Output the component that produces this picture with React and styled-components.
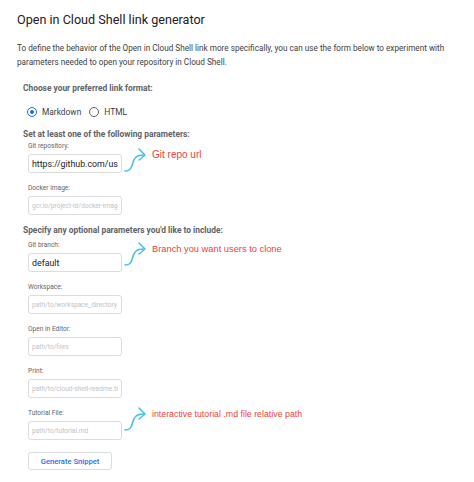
import { createGlobalStyle, styled } from "styled-components";

const GlobalStyle = createGlobalStyle`
    body{
        margin: 0;
        background: #ffffff;
        font-family: Roboto, "Liberation Sans", sans-serif;
    }
`;

const fields = [
    { label: "Git repository:", value: "https://github.com/user", note: "Git repo url", noteSize: 10, lift: 7 },
    { label: "Docker image:", placeholder: "gcr.io/project-id/docker-images" },
];

const optional = [
    { label: "Git branch:", value: "default", note: "Branch you want users to clone", noteSize: 9.3, lift: 12 },
    { label: "Workspace:", placeholder: "path/to/workspace_directory" },
    { label: "Open in Editor:", placeholder: "path/to/files" },
    { label: "Print:", placeholder: "path/to/cloud-shell-readme.txt" },
    { label: "Tutorial File:", placeholder: "path/to/tutorial.md", note: "interactive tutorial .md file relative path", noteSize: 8.8, lift: 15 },
];

// hand-drawn squiggle arrow pointing at a note
function Arrow() {
    return (
        <svg width="24" height="26" viewBox="0 0 24 26" fill="none" stroke="#45c2e2" strokeWidth="1.5" strokeLinecap="round" strokeLinejoin="round">
            <path d="M1 24 C5 24 7 23 8.5 17 C10 11 12 8 20 8" />
            <path d="M15 2 L21 8 L15 13" />
        </svg>
    );
}

function Field({ label, value, placeholder, note, noteSize, lift }) {
    return (
        <FieldBox>
            <Label>{label}</Label>
            <Row>
                <TextInput $filled={!!value} defaultValue={value} placeholder={placeholder} readOnly />
                {note && (
                    <Note $lift={lift}>
                        <Arrow />
                        <NoteText $size={noteSize}>{note}</NoteText>
                    </Note>
                )}
            </Row>
        </FieldBox>
    );
}

export default function App() {
    return (
        <Page>
            <GlobalStyle />
            <Title>Open in Cloud Shell link generator</Title>
            <Intro>
                To define the behavior of the Open in Cloud Shell link more specifically, you can use the form below to experiment with
                parameters needed to open your repository in Cloud Shell.
            </Intro>
            <Form>
                <Heading>Choose your preferred link format:</Heading>
                <RadioRow>
                    <Radio $checked />
                    <RadioLabel>Markdown</RadioLabel>
                    <Radio />
                    <RadioLabel>HTML</RadioLabel>
                </RadioRow>
                <Heading>Set at least one of the following parameters:</Heading>
                <Fields $top={3}>
                    {fields.map(f => <Field key={f.label} {...f} />)}
                </Fields>
                <Heading $top={10}>Specify any optional parameters you'd like to include:</Heading>
                <Fields $top={6}>
                    {optional.map(f => <Field key={f.label} {...f} />)}
                </Fields>
                <Button>Generate Snippet</Button>
            </Form>
        </Page>
    );
}

const Page = styled.main`
    width: 474px;
    height: 482px;
    box-sizing: border-box;
    padding: 11px 0 0 17px;
    overflow: hidden;
`;

const Title = styled.h1`
    margin: 0;
    font-weight: 400;
    font-size: 12.6px;
    line-height: 18px;
    color: #202124;
`;

const Intro = styled.p`
    margin: 12px 0 0;
    font-size: 8.2px;
    line-height: 14px;
    color: #3c4043;
    width: 455px;
`;

const Form = styled.section`
    padding-left: 6px;
    margin-top: 14px;
    display: flex;
    flex-direction: column;
`;

const Heading = styled.h2`
    margin: ${p => p.$top || 0}px 0 0;
    font-size: 8.4px;
    line-height: 10px;
    font-weight: 700;
    color: #5f6368;
`;

const RadioRow = styled.div`
    display: flex;
    align-items: center;
    height: 12px;
    margin: 13px 0 11px 4px;
    gap: 5px;
`;

const Radio = styled.span`
    width: 10px;
    height: 10px;
    border-radius: 50%;
    border: 1.2px solid ${p => (p.$checked ? "#1a73e8" : "#5f6368")};
    box-sizing: border-box;
    display: flex;
    align-items: center;
    justify-content: center;
    &::after{
        content: "";
        width: 4.5px;
        height: 4.5px;
        border-radius: 50%;
        background: ${p => (p.$checked ? "#1a73e8" : "transparent")};
    }
`;

const RadioLabel = styled.span`
    font-size: 8.4px;
    color: #3c4043;
    margin-right: 3px;
`;

const Fields = styled.div`
    display: flex;
    flex-direction: column;
    gap: 11px;
    padding-left: 5px;
    margin-top: ${p => p.$top}px;
`;

const FieldBox = styled.div`
    display: flex;
    flex-direction: column;
    gap: 4px;
`;

const Label = styled.label`
    font-size: 6.6px;
    line-height: 8px;
    color: #5f6368;
`;

const Row = styled.div`
    display: flex;
    align-items: flex-start;
`;

const TextInput = styled.input`
    width: 94px;
    height: 19px;
    box-sizing: border-box;
    border: 1px solid #dadce0;
    border-radius: 3px;
    padding: 0 3px;
    font-family: Roboto, sans-serif;
    font-size: ${p => (p.$filled ? "8.8px" : "6.6px")};
    color: #202124;
    background: #fff;
    outline: 0;
    &::placeholder{
        color: #c0c3c7;
    }
`;

const Note = styled.div`
    display: flex;
    align-items: flex-start;
    margin-top: -${p => p.$lift}px;
    margin-left: 2px;
    gap: 4px;
`;

const NoteText = styled.span`
    font-family: "Liberation Sans", Arial, sans-serif;
    font-size: ${p => p.$size}px;
    line-height: 12px;
    color: #e8453c;
    margin-top: 2px;
`;

const Button = styled.button`
    align-self: flex-start;
    margin: 12px 0 0 5px;
    width: 84px;
    height: 18px;
    background: #fff;
    border: 1px solid #dadce0;
    border-radius: 3px;
    font-family: Roboto, sans-serif;
    font-size: 7.6px;
    font-weight: 500;
    color: #1a73e8;
    padding: 0;
`;
